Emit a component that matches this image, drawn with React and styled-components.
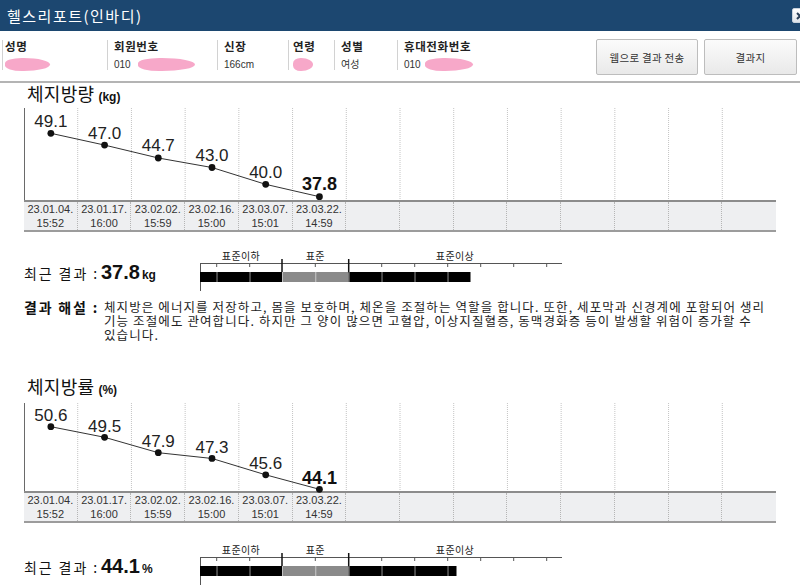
import React from "react";
import styled, { createGlobalStyle } from "styled-components";

const GlobalStyle = createGlobalStyle`
  html, body {
    margin: 0;
    padding: 0;
    background: #fff;
    overflow: hidden;
  }
  body {
    font-family: "Noto Sans CJK KR", "Liberation Sans", sans-serif;
    color: #222;
  }
`;

const KR = `"Noto Sans CJK KR", "Liberation Sans", sans-serif`;
const NUM = `"Liberation Sans", Arial, sans-serif`;

const Window = styled.div`
  width: 800px;
  height: 586px;
  overflow: hidden;
  background: #fff;
`;

const TitleBar = styled.div`
  height: 31px;
  background: #1c4770;
  display: flex;
  align-items: center;
  justify-content: space-between;
  padding-left: 7px;
  overflow: hidden;
`;

const TitleText = styled.h1`
  margin: 0;
  font-family: ${KR};
  font-size: 15px;
  font-weight: 400;
  line-height: 20px;
  color: #fff;
  letter-spacing: 1.5px;
`;

const CloseButton = styled.button`
  width: 16px;
  height: 15px;
  margin-right: -8px;
  padding: 0;
  border: 1px solid #c9d2dc;
  border-radius: 2px;
  background: linear-gradient(#ffffff, #dfe4ea);
  display: flex;
  align-items: center;
  justify-content: center;
`;

const InfoRow = styled.div`
  height: 50px;
  border-bottom: 2px solid #b4b4b4;
  display: flex;
  align-items: flex-start;
  padding: 0 3px 0 2px;
`;

const InfoCol = styled.div`
  box-sizing: border-box;
  width: ${(p) => p.$w}px;
  flex: ${(p) => (p.$w ? "none" : "1")};
  height: 30px;
  margin-top: 9px;
  padding-left: ${(p) => p.$pl ?? 6}px;
  border-left: 1px solid #d2d2d2;
`;

const InfoLabel = styled.div`
  font-family: ${KR};
  font-size: 11.5px;
  font-weight: 700;
  line-height: 12px;
  letter-spacing: 0.6px;
  color: #222;
`;

const InfoValue = styled.div`
  margin-top: 6px;
  height: 13px;
  display: flex;
  align-items: center;
  font-family: ${NUM}, "Noto Sans CJK KR";
  font-size: 10px;
  line-height: 12px;
  color: #333;
`;

const Redact = styled.span`
  display: inline-block;
  width: ${(p) => p.$w}px;
  height: 13px;
  margin-left: ${(p) => p.$ml ?? 0}px;
  background: #f7a8c9;
  border-radius: 45% 70% 70% 45% / 50% 60% 60% 50%;
`;

const Buttons = styled.div`
  display: flex;
  gap: 6px;
  margin-top: 8px;
`;

const ActionButton = styled.button`
  box-sizing: border-box;
  width: ${(p) => p.$w}px;
  height: 36px;
  border: 1px solid #bdbdbd;
  border-radius: 2px;
  background: linear-gradient(#fbfbfb, #e9e9e9);
  font-family: ${KR};
  font-size: 10.5px;
  color: #333;
  letter-spacing: 0.3px;
  padding: 0;
`;

const SectionTitle = styled.h2`
  margin: ${(p) => p.$mt ?? 0}px 0 0 27px;
  height: ${(p) => p.$h}px;
  font-family: ${KR};
  font-size: 18px;
  font-weight: 400;
  line-height: 20px;
  color: #111;
  letter-spacing: 0.3px;
`;

const Unit = styled.span`
  font-family: ${NUM};
  font-size: 12px;
  font-weight: 700;
  margin-left: 4px;
  letter-spacing: 0;
`;

const ChartWrap = styled.div`
  margin-left: 24px;
  width: 752px;
`;

const Plot = styled.svg`
  display: block;
  overflow: visible;
`;

const DateStrip = styled.div`
  display: grid;
  grid-template-columns: repeat(14, 1fr);
  height: 28px;
  background: #eeeff1;
  border-top: 2px solid #8c8c8c;
  border-bottom: 2px solid #9c9c9c;
`;

const DateCell = styled.div`
  border-right: ${(p) => (p.$last ? "none" : "1px dotted #b5b5b5")};
  font-family: ${NUM};
  font-size: 11px;
  line-height: 14px;
  text-align: center;
  color: #333;
  white-space: nowrap;
`;

const ResultRow = styled.div`
  display: flex;
  align-items: flex-start;
  margin-top: ${(p) => p.$mt}px;
  height: 47px;
`;

const ResultText = styled.div`
  width: 176px;
  padding-left: 24px;
  margin-top: 16px;
  height: 24px;
  display: flex;
  align-items: baseline;
  white-space: nowrap;
`;

const ResultLabel = styled.span`
  font-family: ${KR};
  font-size: 14px;
  letter-spacing: 1.9px;
  color: #111;
`;

const ResultValue = styled.span`
  font-family: ${NUM};
  font-size: 20px;
  font-weight: 700;
  color: #111;
  margin-left: 2px;
`;

const ResultUnit = styled.span`
  font-family: ${NUM};
  font-size: 12px;
  font-weight: 700;
  margin-left: 2px;
  color: #111;
`;

const Explain = styled.div`
  display: flex;
  margin: 8px 0 0 24px;
`;

const ExplainLabel = styled.div`
  width: 80px;
  flex: none;
  font-family: ${KR};
  font-size: 14px;
  font-weight: 700;
  line-height: 14px;
  letter-spacing: 1.8px;
  color: #111;
`;

const ExplainText = styled.p`
  margin: 0;
  font-family: ${KR};
  font-size: 12.5px;
  line-height: 14px;
  letter-spacing: 1.1px;
  color: #222;
  white-space: nowrap;
  span {
    display: block;
  }
`;

const DATES = [
  ["23.01.04.", "15:52"],
  ["23.01.17.", "16:00"],
  ["23.02.02.", "15:59"],
  ["23.02.16.", "15:00"],
  ["23.03.07.", "15:01"],
  ["23.03.22.", "14:59"],
];

const COL = 752 / 14;

function LineChart({ values, height, top, scale, labelGap }) {
  const pts = values.map((v, i) => [COL * (i + 0.5), (top - v) * scale]);
  return (
    <Plot width="752" height={height} viewBox={`0 0 752 ${height}`}>
      {Array.from({ length: 13 }, (_, k) => (
        <line
          key={k}
          x1={COL * (k + 1)}
          x2={COL * (k + 1)}
          y1="0"
          y2={height}
          stroke="#c4c4c4"
          strokeDasharray="1 1"
        />
      ))}
      <line x1="0.5" x2="0.5" y1="0" y2={height} stroke="#6a6a6a" />
      <polyline
        points={pts.map((p) => p.join(",")).join(" ")}
        fill="none"
        stroke="#333"
        strokeWidth="1"
      />
      {pts.map(([x, y], i) => {
        const last = i === pts.length - 1;
        return (
          <g key={i}>
            <circle cx={x} cy={y} r="3.4" fill="#111" />
            <text
              x={x}
              y={y - labelGap}
              textAnchor="middle"
              fontFamily={NUM}
              fontSize={last ? 18 : 17}
              fontWeight={last ? 700 : 400}
              fill={last ? "#111" : "#222"}
            >
              {values[i].toFixed(1)}
            </text>
          </g>
        );
      })}
    </Plot>
  );
}

const BOUNDS = [0, 16.7, 49.7, 82, 115.3, 148.7, 181.7, 214.7, 247.7, 280.7, 313.7, 346.7];

function Gauge({ end }) {
  const segs = [];
  for (let i = 0; i < BOUNDS.length - 1; i++) {
    const a = BOUNDS[i];
    const b = Math.min(BOUNDS[i + 1], end);
    if (a >= end) break;
    const normal = a >= 82 && a < 148.7;
    segs.push(
      <g key={i}>
        <rect x={a} y="27" width={b - a} height="10" fill={normal ? "#8a8a8a" : "#000"} />
        {i > 0 && (
          <rect x={a} y="27" width="1" height="10" fill={normal ? "#c2c2c2" : "#6a6a6a"} />
        )}
      </g>
    );
  }
  const ticks = [16.7, 49.7, 115.3, 181.7, 214.7, 247.7, 280.7, 313.7, 346.7];
  return (
    <svg width="365" height="47" viewBox="0 0 365 47" style={{ display: "block" }}>
      {[
        ["표준이하", 41],
        ["표준", 115.3],
        ["표준이상", 255],
      ].map(([t, x]) => (
        <text
          key={t}
          x={x}
          y="15"
          textAnchor="middle"
          fontFamily={KR}
          fontSize="10"
          letterSpacing="0.4"
          fill="#222"
        >
          {t}
        </text>
      ))}
      <line x1="0" x2="362" y1="18.5" y2="18.5" stroke="#555" />
      <line x1="0.5" x2="0.5" y1="18" y2="46" stroke="#555" />
      {ticks.map((x) => (
        <line key={x} x1={x} x2={x} y1="18" y2="22" stroke="#555" />
      ))}
      <line x1="82" x2="82" y1="14" y2="28" stroke="#111" strokeWidth="1.5" />
      <line x1="148.7" x2="148.7" y1="14" y2="28" stroke="#111" strokeWidth="1.5" />
      {segs}
    </svg>
  );
}

function Section({ title, unit, values, chart, result, resultUnit, end, titleMt, titleH, resultMt }) {
  return (
    <section>
      <SectionTitle $mt={titleMt} $h={titleH}>
        {title}
        <Unit>{unit}</Unit>
      </SectionTitle>
      <ChartWrap>
        <LineChart values={values} {...chart} />
        <DateStrip>
          {Array.from({ length: 14 }, (_, i) => (
            <DateCell key={i} $last={i === 13}>
              {DATES[i] && (
                <>
                  {DATES[i][0]}
                  <br />
                  {DATES[i][1]}
                </>
              )}
            </DateCell>
          ))}
        </DateStrip>
      </ChartWrap>
      <ResultRow $mt={resultMt}>
        <ResultText>
          <ResultLabel>최근 결과 :</ResultLabel>
          <ResultValue>{result}</ResultValue>
          <ResultUnit>{resultUnit}</ResultUnit>
        </ResultText>
        <Gauge end={end} />
      </ResultRow>
    </section>
  );
}

export default function App() {
  return (
    <Window>
      <GlobalStyle />
      <TitleBar>
        <TitleText>헬스리포트(인바디)</TitleText>
        <CloseButton aria-label="닫기">
          <svg width="8" height="8" viewBox="0 0 8 8">
            <path d="M1 1L7 7M7 1L1 7" stroke="#2a3f58" strokeWidth="2" />
          </svg>
        </CloseButton>
      </TitleBar>

      <InfoRow>
        <InfoCol $w={105} $pl={2}>
          <InfoLabel>성명</InfoLabel>
          <InfoValue>
            <Redact $w={45} />
          </InfoValue>
        </InfoCol>
        <InfoCol $w={110}>
          <InfoLabel>회원번호</InfoLabel>
          <InfoValue>
            010
            <Redact $w={57} $ml={7} />
          </InfoValue>
        </InfoCol>
        <InfoCol $w={71}>
          <InfoLabel>신장</InfoLabel>
          <InfoValue>166cm</InfoValue>
        </InfoCol>
        <InfoCol $w={46} $pl={4}>
          <InfoLabel>연령</InfoLabel>
          <InfoValue>
            <Redact $w={20} />
          </InfoValue>
        </InfoCol>
        <InfoCol $w={63}>
          <InfoLabel>성별</InfoLabel>
          <InfoValue>여성</InfoValue>
        </InfoCol>
        <InfoCol>
          <InfoLabel>휴대전화번호</InfoLabel>
          <InfoValue>
            010
            <Redact $w={48} $ml={4} />
          </InfoValue>
        </InfoCol>
        <Buttons>
          <ActionButton $w={102}>웹으로 결과 전송</ActionButton>
          <ActionButton $w={93}>결과지</ActionButton>
        </Buttons>
      </InfoRow>

      <Section
        title="체지방량"
        unit="(kg)"
        values={[49.1, 47.0, 44.7, 43.0, 40.0, 37.8]}
        chart={{ height: 92, top: 53.61, scale: 5.61, labelGap: 6.5 }}
        result="37.8"
        resultUnit="kg"
        end={270.5}
        titleMt={0}
        titleH={25}
        resultMt={13}
      />
      <Explain>
        <ExplainLabel>결과 해설 :</ExplainLabel>
        <ExplainText>
          <span>
            체지방은 에너지를 저장하고, 몸을 보호하며, 체온을 조절하는 역할을 합니다. 또한, 세포막과 신경계에 포함되어 생리
          </span>
          <span>기능 조절에도 관여합니다. 하지만 그 양이 많으면 고혈압, 이상지질혈증, 동맥경화증 등이 발생할 위험이 증가할 수</span>
          <span>있습니다.</span>
        </ExplainText>
      </Explain>
      <Section
        title="체지방률"
        unit="(%)"
        values={[50.6, 49.5, 47.9, 47.3, 45.6, 44.1]}
        chart={{ height: 88, top: 53.06, scale: 9.63, labelGap: 5.5 }}
        result="44.1"
        resultUnit="%"
        end={256.5}
        titleMt={34}
        titleH={27}
        resultMt={16}
      />
    </Window>
  );
}
